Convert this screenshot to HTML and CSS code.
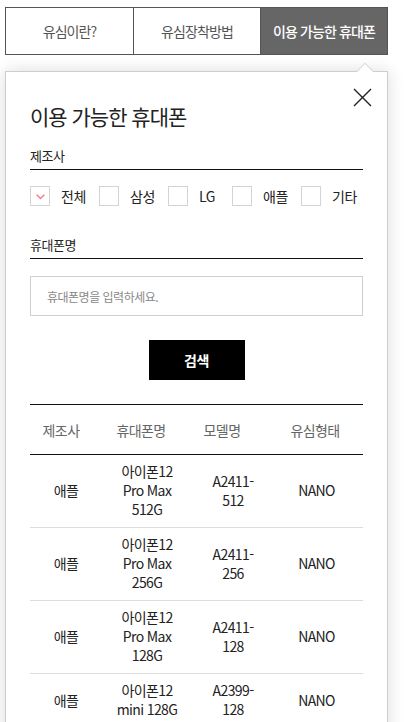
FILE: index.html
```html
<!DOCTYPE html>
<html lang="ko">
<head>
<meta charset="utf-8">
<title>이용 가능한 휴대폰</title>
<link rel="stylesheet" href="styles.css">
</head>
<body>
<div class="page">
  <nav class="tabs">
    <div class="tab">유심이란?</div>
    <div class="tab">유심장착방법</div>
    <div class="tab active">이용 가능한 휴대폰</div>
  </nav>
  <section class="panel">
    <svg class="caret" width="18" height="10" viewBox="0 0 18 10"><polyline points="0.5,10 9,1.2 17.5,10" fill="#fff" stroke="#cfcfcf" stroke-width="1"/></svg>
    <button class="close" aria-label="닫기"><svg width="19" height="19" viewBox="0 0 19 19"><path d="M1 1 L18 18 M18 1 L1 18" stroke="#222" stroke-width="1.4" fill="none"/></svg></button>
    <h2 class="title">이용 가능한 휴대폰</h2>
    <div class="field-label">제조사</div>
    <div class="checks">
      <label class="check"><span class="box checked"><svg width="9" height="6" viewBox="0 0 9 6"><polyline points="0.7,0.7 4.5,4.5 8.3,0.7" fill="none" stroke="#f07a8c" stroke-width="1.3"/></svg></span><span class="ck-text">전체</span></label>
      <label class="check"><span class="box"></span><span class="ck-text">삼성</span></label>
      <label class="check lg"><span class="box"></span><span class="ck-text">LG</span></label>
      <label class="check"><span class="box"></span><span class="ck-text">애플</span></label>
      <label class="check"><span class="box"></span><span class="ck-text">기타</span></label>
    </div>
    <div class="field-label second">휴대폰명</div>
    <input class="name-input" type="text" placeholder="휴대폰명을 입력하세요.">
    <div class="btn-row"><button class="search">검색</button></div>
    <div class="table">
      <div class="thead">
        <div class="th">제조사</div>
        <div class="th">휴대폰명</div>
        <div class="th">모델명</div>
        <div class="th last">유심형태</div>
      </div>
      <div class="tr">
        <div class="td">애플</div>
        <div class="td">아이폰12<br>Pro Max<br>512G</div>
        <div class="td">A2411-<br>512</div>
        <div class="td">NANO</div>
      </div>
      <div class="tr">
        <div class="td">애플</div>
        <div class="td">아이폰12<br>Pro Max<br>256G</div>
        <div class="td">A2411-<br>256</div>
        <div class="td">NANO</div>
      </div>
      <div class="tr">
        <div class="td">애플</div>
        <div class="td">아이폰12<br>Pro Max<br>128G</div>
        <div class="td">A2411-<br>128</div>
        <div class="td">NANO</div>
      </div>
      <div class="tr">
        <div class="td">애플</div>
        <div class="td">아이폰12<br>mini 128G</div>
        <div class="td">A2399-<br>128</div>
        <div class="td">NANO</div>
      </div>
    </div>
  </section>
</div>
</body>
</html>
```

FILE: styles.css
```css
* { box-sizing: border-box; }
html, body { margin: 0; padding: 0; background: #fff; }
body {
  font-family: "Noto Sans CJK KR", "Noto Sans", sans-serif;
  color: #222;
  overflow: hidden;
}
.page { padding: 7px 16px 0 5px; }

.tabs {
  display: grid;
  grid-template-columns: repeat(3, 1fr);
  height: 48px;
  border: 1px solid #555;
}
.tab {
  display: flex;
  align-items: center;
  justify-content: center;
  font-size: 14px;
  letter-spacing: -0.9px;
  color: #555;
  white-space: nowrap;
}
.tab + .tab { border-left: 1px solid #555; }
.tab.active { background: #666; color: #fff; font-weight: 500; }

.panel {
  position: relative;
  margin-top: 16px;
  border: 1px solid #cdcdcd;
  background: #fff;
  box-shadow: 0 0 16px rgba(0, 0, 0, 0.14);
  padding: 29px 24px 40px;
  min-height: 700px;
}
.caret { position: absolute; top: -10px; right: 13px; display: block; }
.close {
  position: absolute;
  top: 16px;
  right: 15px;
  border: 0;
  padding: 0;
  background: none;
  line-height: 0;
}
.title {
  margin: 0;
  font-size: 21px;
  line-height: 30px;
  font-weight: 400;
  letter-spacing: -1px;
  color: #222;
}
.field-label {
  margin-top: 15px;
  font-size: 13px;
  line-height: 20px;
  letter-spacing: -0.5px;
  padding-bottom: 3px;
  border-bottom: 1px solid #111;
}
.field-label.second { margin-top: 29px; }

.checks { display: flex; margin-top: 16px; height: 20px; }
.check {
  display: flex;
  align-items: center;
  flex: 0 0 69px;
  white-space: nowrap;
}
.check.lg { flex-basis: 64px; }
.check:last-child { flex: 0 0 auto; }
.box {
  width: 20px;
  height: 20px;
  flex: 0 0 20px;
  border: 1px solid #d4d4d4;
  display: flex;
  align-items: center;
  justify-content: center;
  padding-top: 2px;
}
.ck-text {
  margin-left: 11px;
  font-size: 14px;
  letter-spacing: -0.5px;
  color: #222;
}

.name-input {
  display: block;
  width: 100%;
  height: 40px;
  margin-top: 17px;
  border: 1px solid #cfcfcf;
  padding: 0 16px;
  font-family: inherit;
  font-size: 12px;
  letter-spacing: -0.5px;
  color: #222;
  outline: none;
}
.name-input::placeholder { color: #888; }

.btn-row { display: flex; justify-content: center; margin-top: 24px; }
.search {
  width: 96px;
  height: 40px;
  border: 0;
  background: #000;
  color: #fff;
  font-family: inherit;
  font-size: 14px;
  font-weight: 700;
  letter-spacing: -0.5px;
}

.table { margin-top: 24px; border-top: 1px solid #111; }
.thead {
  display: grid;
  grid-template-columns: 62px 98px 64px 1fr;
  height: 50px;
  align-items: center;
  border-bottom: 1px solid #111;
}
.th {
  text-align: center;
  font-size: 14px;
  letter-spacing: -0.6px;
  color: #666;
}
.th.last { padding-left: 13px; }
.tr {
  display: grid;
  grid-template-columns: 72px 90px 82px 1fr;
  align-items: center;
  border-bottom: 1px solid #ddd;
  padding: 7px 0 8px;
}
.td {
  text-align: center;
  font-size: 14px;
  line-height: 19px;
  letter-spacing: -0.6px;
  color: #222;
}
.td:last-child { padding-right: 4px; }
```
